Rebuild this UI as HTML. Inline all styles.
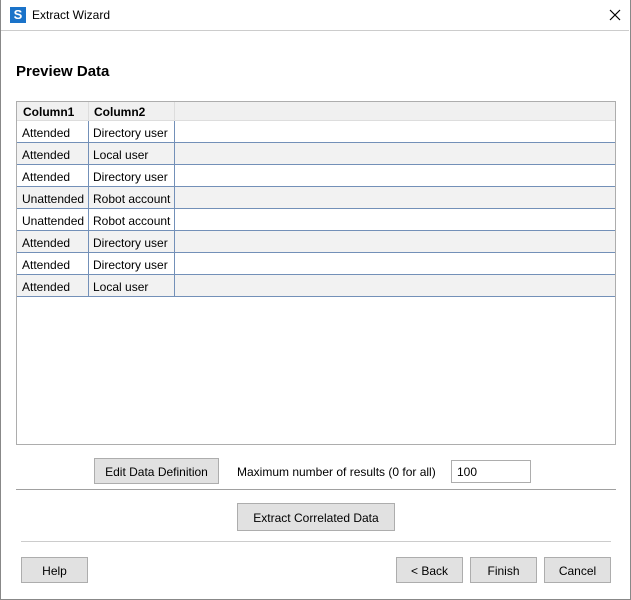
<!DOCTYPE html>
<html><head><meta charset="utf-8"><style>
*{box-sizing:border-box;margin:0;padding:0}
body{width:631px;height:600px;background:#fff;font-family:"Liberation Sans",sans-serif;font-size:12px;color:#000;position:relative;overflow:hidden}
.a{position:absolute}
.btn{position:absolute;background:#e1e1e1;border:1px solid #adadad;text-align:center;font-size:12px;line-height:26px}
.row{position:absolute;left:17px;width:598px;height:22px;border-bottom:1px solid #7390b8}
.c{position:absolute;top:2px;line-height:21px;padding-left:5px;white-space:nowrap}
</style></head><body>
<div class="a" style="left:0;top:0;width:631px;height:600px;border:1px solid #888;border-top:none"></div>
<div class="a" style="left:1px;top:0;width:628px;height:31px;background:#fff;border-bottom:1px solid #ccc"></div>
<div class="a" style="left:10px;top:7px;width:16px;height:16px;background:#1a73c9;color:#fff;font-weight:bold;font-size:13px;line-height:16px;text-align:center">S</div>
<div class="a" style="left:32px;top:8px;font-size:12px">Extract Wizard</div>
<svg class="a" style="left:609px;top:9px" width="12" height="12"><path d="M1 1L11 11M11 1L1 11" stroke="#000" stroke-width="1.2"/></svg>
<div class="a" style="left:16px;top:63px;font-size:15px;font-weight:bold">Preview Data</div>
<div class="a" style="left:16px;top:101px;width:600px;height:344px;border:1px solid #adadad;background:#fff"></div>
<div class="a" style="left:17px;top:102px;width:598px;height:19px;background:#f0f0f0;border-bottom:1px solid #ddd"></div>
<div class="a" style="left:88px;top:102px;width:1px;height:19px;background:#ddd"></div>
<div class="a" style="left:174px;top:102px;width:1px;height:19px;background:#ddd"></div>
<div class="a" style="left:23px;top:105px;font-weight:bold">Column1</div>
<div class="a" style="left:94px;top:105px;font-weight:bold">Column2</div>
<div class="row" style="top:121px;background:#fff"><span class="c" style="left:0">Attended</span><span class="c" style="left:71px">Directory user</span></div>
<div class="row" style="top:143px;background:#f2f2f2"><span class="c" style="left:0">Attended</span><span class="c" style="left:71px">Local user</span></div>
<div class="row" style="top:165px;background:#fff"><span class="c" style="left:0">Attended</span><span class="c" style="left:71px">Directory user</span></div>
<div class="row" style="top:187px;background:#f2f2f2"><span class="c" style="left:0">Unattended</span><span class="c" style="left:71px">Robot account</span></div>
<div class="row" style="top:209px;background:#fff"><span class="c" style="left:0">Unattended</span><span class="c" style="left:71px">Robot account</span></div>
<div class="row" style="top:231px;background:#f2f2f2"><span class="c" style="left:0">Attended</span><span class="c" style="left:71px">Directory user</span></div>
<div class="row" style="top:253px;background:#fff"><span class="c" style="left:0">Attended</span><span class="c" style="left:71px">Directory user</span></div>
<div class="row" style="top:275px;background:#f2f2f2"><span class="c" style="left:0">Attended</span><span class="c" style="left:71px">Local user</span></div>
<div class="a" style="left:88px;top:121px;width:1px;height:176px;background:#7390b8"></div>
<div class="a" style="left:174px;top:121px;width:1px;height:176px;background:#7390b8"></div>
<div class="btn" style="left:94px;top:458px;width:125px;height:26px">Edit Data Definition</div>
<div class="a" style="left:237px;top:465px">Maximum number of results (0 for all)</div>
<div class="a" style="left:451px;top:460px;width:80px;height:23px;border:1px solid #adadad;padding:4px 0 0 5px">100</div>
<div class="a" style="left:16px;top:489px;width:600px;height:1px;background:#a0a0a0"></div>
<div class="btn" style="left:237px;top:503px;width:158px;height:28px;line-height:28px">Extract Correlated Data</div>
<div class="a" style="left:21px;top:541px;width:590px;height:1px;background:#ccc"></div>
<div class="btn" style="left:21px;top:557px;width:67px;height:26px">Help</div>
<div class="btn" style="left:396px;top:557px;width:67px;height:26px">&lt; Back</div>
<div class="btn" style="left:470px;top:557px;width:67px;height:26px">Finish</div>
<div class="btn" style="left:544px;top:557px;width:67px;height:26px">Cancel</div>
</body></html>
